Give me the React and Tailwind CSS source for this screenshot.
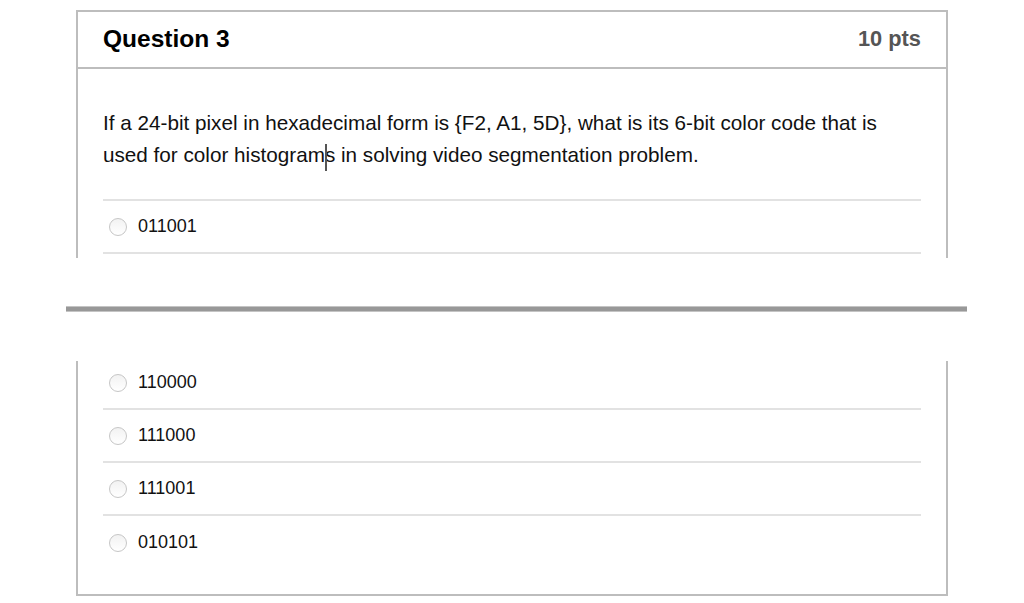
import React from 'react';

const topAnswers = ['011001'];
const bottomAnswers = ['110000', '111000', '111001', '010101'];

const Radio = () => (
  <span className="inline-block h-[18px] w-[18px] flex-none rounded-full border border-[#c6c6c6] bg-gradient-to-b from-[#f2f2f2] to-white" />
);

const AnswerRow = ({ label, last }) => (
  <div className={`flex h-[53px] items-center gap-[11px] pl-[6px] ${last ? '' : 'border-b-2 border-[#e2e2e2]'}`}>
    <Radio />
    <span className="text-[18px] text-[#111]">{label}</span>
  </div>
);

export default function App() {
  return (
    <div
      className="min-h-screen bg-white text-black"
      style={{ fontFamily: '"Liberation Sans", Arial, sans-serif' }}
    >
      <div className="flex flex-col pt-[10px]">
        {/* upper part of the question card, cut off at the bottom */}
        <div className="ml-[76px] h-[248px] w-[872px] border-x-2 border-t-2 border-[#bdbdbd]">
          <div className="flex h-[57px] items-center justify-between border-b-2 border-[#bdbdbd] px-[25px]">
            <span className="text-[24.5px] font-bold">Question 3</span>
            <span className="text-[21.8px] font-bold text-[#555]">10 pts</span>
          </div>
          <div className="px-[25px]">
            <p className="mt-[38px] text-[20.7px] leading-[32px] text-[#111]">
              If a 24-bit pixel in hexadecimal form is {'{'}F2, A1, 5D{'}'}, what is its 6-bit color code that is
              <br />
              used for color histogram
              <span className="relative">
                <span className="absolute top-[1px] left-0 h-[27px] w-[2px] bg-[#555]" />
              </span>
              s in solving video segmentation problem.
            </p>
            <div className="mt-[28px] border-t-2 border-[#e2e2e2]">
              {topAnswers.map((a) => (
                <AnswerRow key={a} label={a} />
              ))}
            </div>
          </div>
        </div>

        {/* grey divider between the two halves */}
        <div className="mt-[48px] ml-[66px] h-[6px] w-[901px] border-y border-[#c4c4c4] bg-[#989898]" />

        {/* lower part of the question card */}
        <div className="mt-[49px] ml-[76px] w-[872px] border-x-2 border-b-2 border-[#bdbdbd] px-[25px] pb-[25px]">
          <div className="-mt-[4px]">
            {bottomAnswers.map((a, i) => (
              <AnswerRow key={a} label={a} last={i === bottomAnswers.length - 1} />
            ))}
          </div>
        </div>
      </div>
    </div>
  );
}
